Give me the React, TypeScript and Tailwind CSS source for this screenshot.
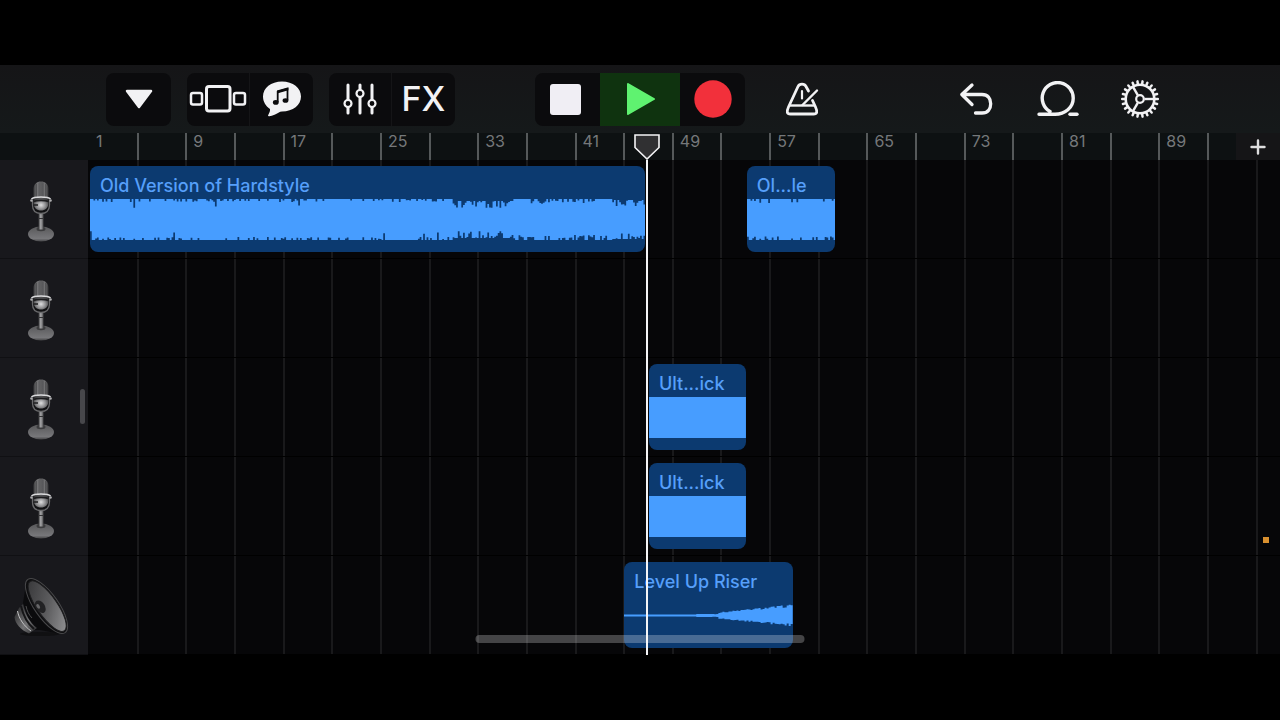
import type { ReactNode } from 'react'

const TOTAL_BARS = 92
const PLAYHEAD = 45.8

type Wave = 'dense' | 'light' | 'flat' | 'riser'

type Clip = {
  name: string
  start: number
  length: number
  wave: Wave
}

type Track = {
  name: string
  icon: 'mic' | 'speaker'
  clips: Clip[]
}

const tracks: Track[] = [
  {
    name: 'Audio 1',
    icon: 'mic',
    clips: [
      { name: 'Old Version of Hardstyle', start: 0, length: 45.65, wave: 'dense' },
      { name: 'Ol...le', start: 54, length: 7.26, wave: 'light' },
    ],
  },
  { name: 'Audio 2', icon: 'mic', clips: [] },
  { name: 'Audio 3', icon: 'mic', clips: [{ name: 'Ult...ick', start: 45.95, length: 7.97, wave: 'flat' }] },
  { name: 'Audio 4', icon: 'mic', clips: [{ name: 'Ult...ick', start: 45.95, length: 7.97, wave: 'flat' }] },
  { name: 'Effects', icon: 'speaker', clips: [{ name: 'Level Up Riser', start: 43.93, length: 13.87, wave: 'riser' }] },
]

const columns = Array.from({ length: 23 }, (_, i) => i)

const percent = (bars: number) => `${(bars / TOTAL_BARS) * 100}%`

// Small repeatable noise source, 0..1
const noise = (n: number) => {
  const v = Math.sin(n * 127.1 + 311.7) * 43758.5453
  return v - Math.floor(v)
}

const notch = (i: number, t: number, wave: Wave, seed: number) => {
  const chance = noise(i + seed)
  const depth = noise(i * 3 + seed + 7)
  if (wave === 'light') return chance > 0.75 ? 1 + depth * 3 : 0
  if (t > 0.65 && t < 0.76) return chance > 0.35 ? 2 + depth * 7 : 2
  if (t > 0.94) return chance > 0.3 ? 1 + depth * 6 : 1
  if (t > 0.76) return chance > 0.6 ? 1 + depth * 4 : 0
  if (chance > 0.975) return 5 + depth * 5
  return chance > 0.72 ? 1 + depth * 2 : 0
}

const wavePath = (wave: Wave, count: number) => {
  const top: string[] = []
  const bottom: string[] = []
  for (let i = 0; i < count; i++) {
    const t = i / count
    let y1 = 0
    let y2 = 41
    if (wave === 'riser') {
      const grow = t < 0.42 ? 0.4 : t < 0.55 ? 0.8 : 2 + ((t - 0.55) / 0.45) * 6
      y1 = 20 - grow - (t < 0.42 ? 0 : noise(i + 5) * grow * 0.35)
      y2 = 21 + grow + (t < 0.42 ? 0 : noise(i + 40) * grow * 0.35)
    } else if (wave !== 'flat') {
      y1 += notch(i, t, wave, 11)
      y2 -= notch(i, t, wave, 83)
    }
    top.push(`L${i} ${y1.toFixed(1)}H${i + 1}`)
    bottom.unshift(`L${i + 1} ${y2.toFixed(1)}H${i}`)
  }
  return `M0 20${top.join('')}${bottom.join('')}Z`
}

const waveColumns = { dense: 320, light: 50, flat: 1, riser: 84 }

function ClipView({ clip }: { clip: Clip }) {
  const count = waveColumns[clip.wave]
  return (
    <div
      className="absolute top-1.5 h-[86px] overflow-hidden rounded-lg bg-[#0c3a70]"
      style={{ left: percent(clip.start), width: percent(clip.length) }}
    >
      <p className="h-[33px] pt-2 pl-[10px] text-lg leading-6 font-medium whitespace-nowrap text-[#569ffa]">{clip.name}</p>
      <svg className="block h-[41px] w-full" viewBox={`0 0 ${count} 41`} preserveAspectRatio="none" aria-hidden="true">
        <path d={wavePath(clip.wave, count)} fill="#479dff" />
      </svg>
    </div>
  )
}

function MicIcon() {
  return (
    <svg width="28" height="62" viewBox="0 0 28 62" aria-hidden="true">
      <defs>
        <linearGradient id="mic-head" x1="0" x2="1">
          <stop offset="0" stopColor="#3e3e40" />
          <stop offset="0.3" stopColor="#79797b" />
          <stop offset="0.5" stopColor="#59595b" />
          <stop offset="0.75" stopColor="#717173" />
          <stop offset="1" stopColor="#363638" />
        </linearGradient>
        <linearGradient id="mic-stem" x1="0" x2="1">
          <stop offset="0" stopColor="#3c3c3e" />
          <stop offset="0.45" stopColor="#a9a9ab" />
          <stop offset="1" stopColor="#48484a" />
        </linearGradient>
        <radialGradient id="mic-body" cx="0.5" cy="0.6" r="0.6">
          <stop offset="0" stopColor="#dededf" />
          <stop offset="0.5" stopColor="#8f8f91" />
          <stop offset="1" stopColor="#303032" />
        </radialGradient>
        <linearGradient id="mic-base" x1="0" x2="0" y1="0" y2="1">
          <stop offset="0" stopColor="#58585a" />
          <stop offset="0.8" stopColor="#77777a" />
          <stop offset="1" stopColor="#444446" />
        </linearGradient>
      </defs>
      <ellipse cx="14" cy="54" rx="13" ry="7.5" fill="url(#mic-base)" />
      <ellipse cx="14" cy="49" rx="4.5" ry="2.2" fill="#3c3c3e" />
      <rect x="11.5" y="33" width="5" height="16.500" rx="1" fill="url(#mic-stem)" />
      <path d="M11.5 38.5H16.5" stroke="#333335" />
      <path d="M5.500 21V25C5.500 31 9 33.500 14 33.500S22.500 31 22.500 25V21" fill="#111113" stroke="#6a6a6c" strokeWidth="1.3" />
      <path d="M6.500 17H21.500V23C21.500 28 18 30.500 14 30.500S6.500 28 6.500 23Z" fill="url(#mic-body)" />
      <path d="M6.500 18V9C6.500 4 10 1.500 14 1.500S21.500 4 21.500 9V18Z" fill="url(#mic-head)" />
      <path d="M9.500 4V17M12 2.500V17M16 2.500V17M18.500 4V17" stroke="#3f3f41" strokeWidth="0.5" />
      <path d="M4.500 19C7 16.300 21 16.300 23.500 19" fill="none" stroke="#d9d9db" strokeWidth="1.6" />
      <path d="M6.500 21.500C10 20 18 20 21.500 21.500" fill="none" stroke="#1c1c1e" strokeWidth="1.8" />
      <path d="M6.500 25H11" stroke="#1c1c1e" strokeWidth="1.5" />
      <circle cx="4.500" cy="20.500" r="1.300" fill="#aeaeb0" />
      <circle cx="23.500" cy="20.500" r="1.300" fill="#aeaeb0" />
    </svg>
  )
}

function SpeakerIcon() {
  return (
    <svg width="56" height="62" viewBox="0 0 56 62" aria-hidden="true">
      <defs>
        <linearGradient id="cone" x1="0" y1="0.6" x2="1" y2="0.3">
          <stop offset="0" stopColor="#3a3a3c" />
          <stop offset="0.5" stopColor="#5c5c5e" />
          <stop offset="1" stopColor="#929294" />
        </linearGradient>
        <linearGradient id="magnet" x1="0" y1="0" x2="1" y2="1">
          <stop offset="0" stopColor="#1d1d1f" />
          <stop offset="0.6" stopColor="#737375" />
          <stop offset="1" stopColor="#252527" />
        </linearGradient>
      </defs>
      <ellipse cx="27" cy="58" rx="20" ry="2" fill="#101012" />
      <path d="M13 8L10 27L19 54H27L48 58Z" fill="#0b0b0d" />
      <path d="M6 32L10 28C12 38 17 47 24 52L16 57.500C8 54 2 48 1.500 41Z" fill="url(#magnet)" />
      <path d="M4.500 35C6 43 11 50 18 55" fill="none" stroke="#c4c4c6" strokeWidth="1" />
      <path d="M8 30C10 39 14 47 21 53" fill="none" stroke="#151517" strokeWidth="2" />
      <path d="M13 30C14 35 16 39 19 42" fill="none" stroke="#4d4d4f" strokeWidth="1" />
      <g transform="rotate(55 33.500 30)">
        <ellipse cx="33.500" cy="30" rx="32.500" ry="12" fill="#0f0f11" stroke="#48484a" strokeWidth="1" />
        <ellipse cx="34" cy="29.500" rx="30" ry="10" fill="url(#cone)" stroke="#1f1f21" strokeWidth="1" />
        <ellipse cx="30.500" cy="35.500" rx="7" ry="4.500" fill="#222224" />
        <ellipse cx="29" cy="37" rx="2.500" ry="1.500" fill="#666668" />
      </g>
    </svg>
  )
}

function MetronomeIcon() {
  return (
    <svg width="34" height="34" viewBox="0 0 34 34" fill="none" stroke="#f2f2f4" strokeWidth="2.8" strokeLinecap="round" strokeLinejoin="round" aria-hidden="true">
      <path d="M23.500 9L21 4.500C19.500 1.200 14.500 1.200 13 4.500L3.500 25C1.200 30 2 32 5.500 32H28.500C32 32 32.800 30 30.500 25L27.500 18.500" />
      <path d="M5 23.500H29.500" strokeWidth="2.400" strokeLinecap="butt" />
      <path d="M17 9V16.500" strokeWidth="2.200" />
      <path d="M32 8.500L17.500 23" strokeWidth="2.400" />
    </svg>
  )
}

const teeth = Array.from({ length: 22 }, (_, i) => (i * 360) / 22)

function GearIcon() {
  return (
    <svg width="40" height="40" viewBox="-20 -20 40 40" fill="none" stroke="#f2f2f4" aria-hidden="true">
      <circle r="14.300" strokeWidth="2.600" />
      <circle r="3.800" strokeWidth="2.200" />
      {teeth.map((angle) => (
        <path key={angle} d="M15.500 0H17.800" strokeWidth="2.500" strokeLinecap="round" transform={`rotate(${angle})`} />
      ))}
      {[0, 120, 240].map((angle) => (
        <path key={angle} d="M4.500 0H14" strokeWidth="2.400" transform={`rotate(${angle})`} />
      ))}
    </svg>
  )
}

function ToolButton({ label, className, children }: { label: string; className: string; children: ReactNode }) {
  return (
    <button type="button" aria-label={label} className={`flex h-full shrink-0 items-center justify-center ${className}`}>
      {children}
    </button>
  )
}

function Toolbar() {
  return (
    <header className="flex h-[68px] items-center bg-linear-to-b from-[#151517] to-[#15191a] pr-[108px] pl-[106px]">
      <div className="flex gap-4">
        <div className="flex h-[53px] overflow-hidden rounded-lg bg-[#0b0b0d]">
          <ToolButton label="Browser" className="w-[65px]">
            <svg width="28" height="20" viewBox="0 0 28 20" aria-hidden="true">
              <path d="M2 2H26L14 18Z" fill="#f2f2f4" stroke="#f2f2f4" strokeWidth="2.500" strokeLinejoin="round" />
            </svg>
          </ToolButton>
        </div>

        <div className="flex h-[53px] overflow-hidden rounded-lg bg-[#0b0b0d]">
          <ToolButton label="Tracks view" className="w-[63px] border-r border-[#151517]">
            <svg width="58" height="30" viewBox="0 0 58 30" fill="none" stroke="#f2f2f4" aria-hidden="true">
              <rect x="2" y="9" width="11" height="11.500" rx="2" strokeWidth="2.500" />
              <rect x="17.500" y="2.500" width="23.500" height="24.500" rx="2.500" strokeWidth="3" />
              <rect x="45" y="9" width="11" height="11.500" rx="2" strokeWidth="2.500" />
            </svg>
          </ToolButton>
          <ToolButton label="Live loops" className="w-[63px]">
            <svg width="40" height="36" viewBox="0 0 40 36" aria-hidden="true">
              <path d="M20 .5C31 .5 39 7 39 15.500S31 30.500 20 30.500C17.500 30.500 15.500 32.500 12.500 33.800C10 35 7.500 35.500 6.300 35C5.300 34.300 8.500 31.500 8 28C3.500 25 1 20.500 1 15.500C1 7 9 .5 20 .5Z" fill="#f2f2f4" />
              <path d="M15.700 21V10.800L25.500 8V19" fill="none" stroke="#0b0b0d" strokeWidth="1.800" />
              <path d="M15 9.500L26.400 6.300V9.300L15 12.500Z" fill="#0b0b0d" />
              <ellipse cx="13.800" cy="21.400" rx="2.900" ry="2.300" fill="#0b0b0d" />
              <ellipse cx="23.500" cy="19.500" rx="2.900" ry="2.300" fill="#0b0b0d" />
            </svg>
          </ToolButton>
        </div>

        <div className="flex h-[53px] overflow-hidden rounded-lg bg-[#0b0b0d]">
          <ToolButton label="Track controls" className="w-[63px] border-r border-[#151517]">
            <svg width="34" height="32" viewBox="0 0 34 32" fill="#0b0b0d" stroke="#f2f2f4" strokeLinecap="round" aria-hidden="true">
              <path d="M5 2V30M17 2V30M29 2V30" strokeWidth="3" />
              <circle cx="5" cy="20.500" r="3.500" strokeWidth="2.200" />
              <circle cx="17" cy="10.500" r="3.500" strokeWidth="2.200" />
              <circle cx="29" cy="20.500" r="3.500" strokeWidth="2.200" />
            </svg>
          </ToolButton>
          <ToolButton label="FX" className="w-[63px] text-[34px] leading-none font-medium text-[#f2f2f4]">
            FX
          </ToolButton>
        </div>
      </div>

      <div className="ml-20 flex h-[53px] overflow-hidden rounded-lg bg-[#0b0b0d]">
        <ToolButton label="Stop" className="w-[65px] pr-1">
          <svg width="31" height="31" viewBox="0 0 31 31" aria-hidden="true">
            <rect width="31" height="31" rx="3" fill="#f0eef4" />
          </svg>
        </ToolButton>
        <ToolButton label="Play" className="w-20 bg-[#0f330f]">
          <svg width="30" height="34" viewBox="0 0 30 34" aria-hidden="true">
            <path d="M3 2L29 17L3 32Z" fill="#5ff270" stroke="#5ff270" strokeWidth="2" strokeLinejoin="round" />
          </svg>
        </ToolButton>
        <ToolButton label="Record" className="w-[65px]">
          <svg width="38" height="38" viewBox="0 0 38 38" aria-hidden="true">
            <circle cx="19" cy="19" r="18.700" fill="#f2303b" />
          </svg>
        </ToolButton>
      </div>

      <div className="ml-6 h-[53px]">
        <ToolButton label="Metronome" className="w-[66px]">
          <MetronomeIcon />
        </ToolButton>
      </div>

      <div className="ml-auto flex h-[53px] gap-[18px]">
        <ToolButton label="Undo" className="w-16">
          <svg width="34" height="34" viewBox="0 0 34 34" fill="none" stroke="#f2f2f4" strokeWidth="3.300" strokeLinecap="round" strokeLinejoin="round" aria-hidden="true">
            <path d="M13 3L2.800 12.500L13 22.500M2.800 12.500H23C28.800 12.500 31.700 16.300 31.700 21.700S28.800 31 23 31H16.500" />
          </svg>
        </ToolButton>
        <ToolButton label="Loop browser" className="w-16">
          <svg width="44" height="36" viewBox="0 0 44 36" fill="none" stroke="#f2f2f4" strokeWidth="3.400" strokeLinecap="round" aria-hidden="true">
            <path d="M3 33.300H19C29 33.300 37.200 26.500 37.200 17.500A15.500 15.500 0 1 0 14 30.500" />
            <path d="M34 33.300H41" />
          </svg>
        </ToolButton>
        <ToolButton label="Settings" className="w-16">
          <GearIcon />
        </ToolButton>
      </div>
    </header>
  )
}

function Ruler() {
  return (
    <div className="flex h-[27px] bg-[#0d1112] pl-[90px]">
      <div className="relative grid flex-1 grid-cols-[repeat(23,minmax(0,1fr))]">
        {columns.map((i) => (
          <div key={i} className="border-r-2 border-[#55595a] pl-1.5 text-base leading-4 text-[#75787a]">
            {i % 2 === 0 && i * 4 + 1}
          </div>
        ))}
        {/* Playhead handle */}
        <svg
          className="absolute top-px -ml-[13px]"
          style={{ left: percent(PLAYHEAD) }}
          width="26"
          height="26"
          viewBox="0 0 26 26"
          aria-hidden="true"
        >
          <path d="M1 1H25V13.500L13 25L1 13.500Z" fill="#303032" stroke="#f4f4f6" strokeWidth="1.600" />
        </svg>
      </div>
      <div className="w-[27px]" />
      <button type="button" aria-label="Add section" className="flex w-11 items-center justify-center bg-[#151517]">
        <svg width="16" height="16" viewBox="0 0 16 16" aria-hidden="true">
          <path d="M8 1.500V14.500M1.500 8H14.500" stroke="#dededf" strokeWidth="2.400" strokeLinecap="round" />
        </svg>
      </button>
    </div>
  )
}

function TrackRow({ track }: { track: Track }) {
  return (
    <section aria-label={track.name} className="flex h-[99px]">
      <button
        type="button"
        aria-label={`${track.name} instrument`}
        className="flex w-[88px] shrink-0 items-center justify-center border-b border-[#101013] bg-[#18181c] pt-1 pr-1.5"
      >
        {track.icon === 'mic' ? <MicIcon /> : <SpeakerIcon />}
      </button>
      <div className="flex flex-1 border-b border-black bg-[#060608] pl-0.5">
        <div className="relative grid flex-1 grid-cols-[repeat(23,minmax(0,1fr))]">
          {columns.map((i) => (
            <div key={i} className="border-r-2 border-[#19191b]" />
          ))}
          {track.clips.map((clip) => (
            <ClipView key={clip.start} clip={clip} />
          ))}
        </div>
        <div className="w-[49px] border-r-2 border-[#19191b]" />
        <div className="w-[22px]" />
      </div>
    </section>
  )
}

export default function App() {
  return (
    <div className="flex min-h-screen flex-col justify-center bg-black font-['Inter','Liberation_Sans',sans-serif]">
      <Toolbar />
      <Ruler />

      <main className="relative">
        {tracks.map((track) => (
          <TrackRow key={track.name} track={track} />
        ))}

        {/* Playhead line, on the same scale as the lanes */}
        <div className="pointer-events-none absolute inset-y-0 right-[71px] left-[90px]">
          <div className="absolute inset-y-0 -ml-px w-0.5 bg-[#f4f4f6]" style={{ left: percent(PLAYHEAD) }} />
        </div>

        {/* Sidebar grip */}
        <div className="absolute top-[229px] left-20 h-[35px] w-[5px] rounded-full bg-[#47474b]" />

        {/* Microphone in use */}
        <div className="absolute right-[11px] bottom-28 size-1.5 bg-[#d8902f]" />

        {/* Home indicator */}
        <div className="absolute bottom-3 left-1/2 h-2 w-[329px] -translate-x-1/2 rounded-full bg-white/25" />
      </main>
    </div>
  )
}
